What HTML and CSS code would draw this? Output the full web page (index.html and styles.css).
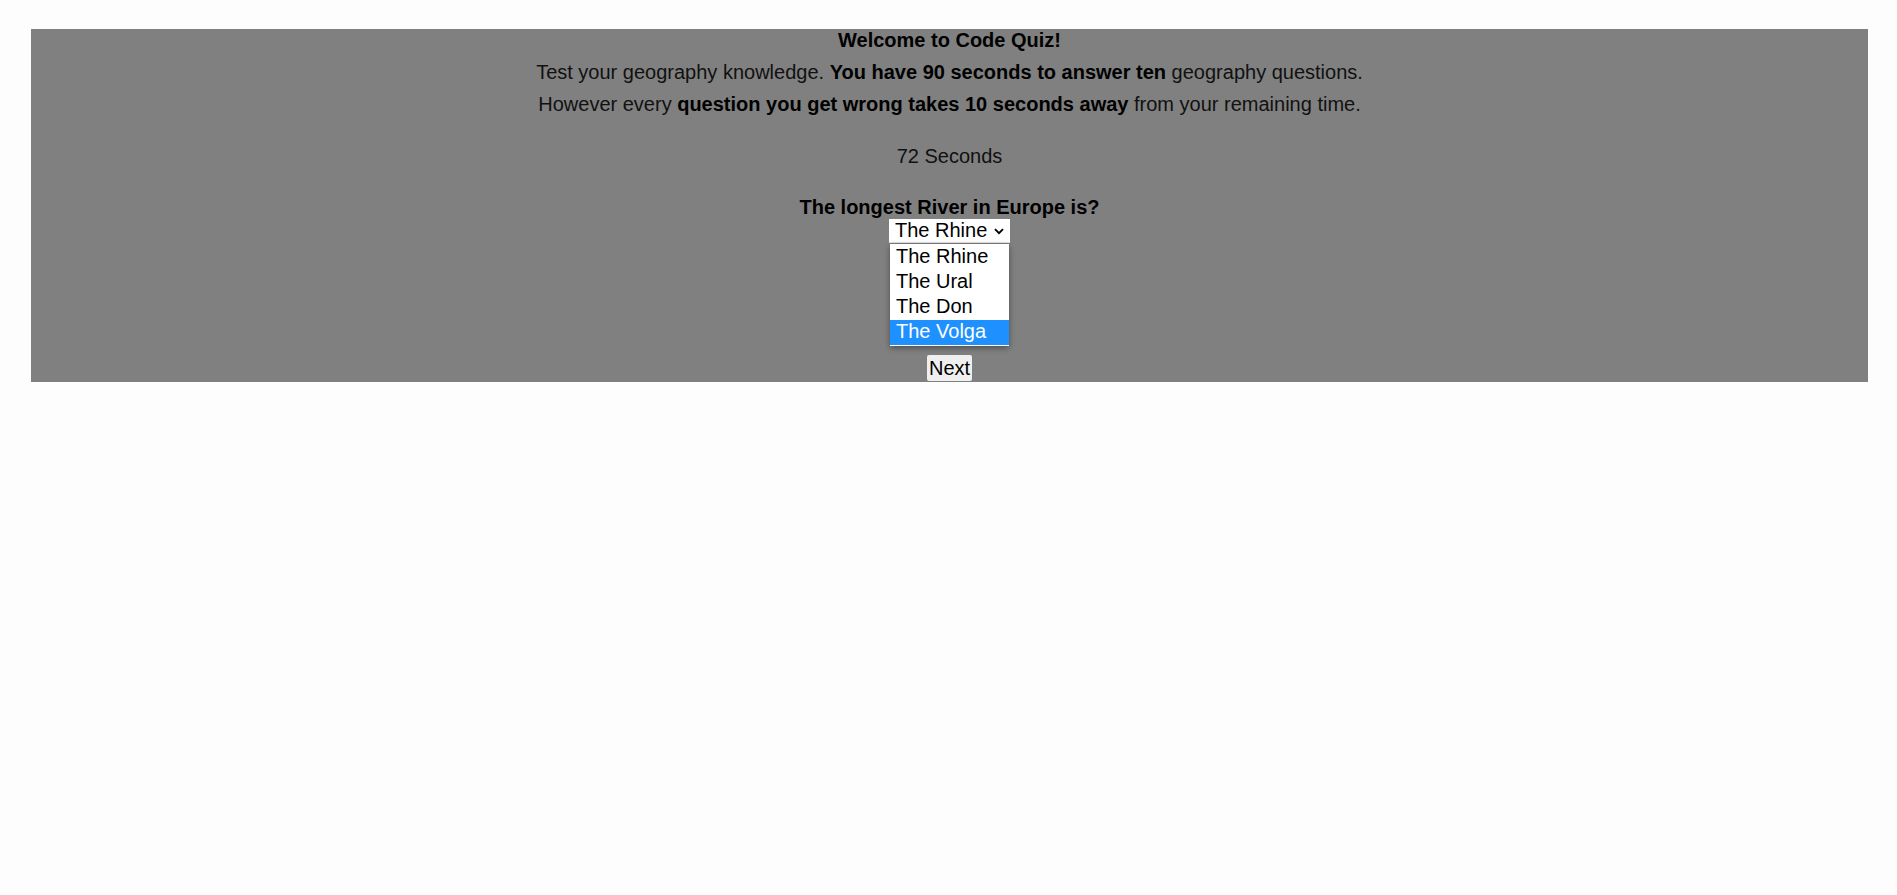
FILE: index.html
```html
<!DOCTYPE html>
<html lang="en">
<head>
<meta charset="utf-8">
<title>Code Quiz</title>
<link rel="stylesheet" href="styles.css">
</head>
<body>
<main class="quiz">
  <h1 class="title">Welcome to Code Quiz!</h1>
  <p class="intro">Test your geography knowledge. <b>You have 90 seconds to answer ten</b> geography questions.</p>
  <p class="intro">However every <b>question you get wrong takes 10 seconds away</b> from your remaining time.</p>
  <p class="timer">72 Seconds</p>
  <h2 class="question">The longest River in Europe is?</h2>
  <div class="select-wrap">
    <div class="select">
      <span class="select-value">The Rhine</span>
      <svg class="chevron" width="10" height="7" viewBox="0 0 10 7"><path d="M1 1.2 L5 5.2 L9 1.2" fill="none" stroke="#000" stroke-width="1.9"/></svg>
    </div>
    <ul class="options">
      <li class="option">The Rhine</li>
      <li class="option">The Ural</li>
      <li class="option">The Don</li>
      <li class="option option-active">The Volga</li>
    </ul>
  </div>
  <button class="next">Next</button>
</main>
</body>
</html>
```

FILE: styles.css
```css
html, body {
  margin: 0;
  padding: 0;
  background: #fdfdfd;
}
body {
  font-family: "Liberation Sans", Arial, sans-serif;
  font-size: 20px;
  color: #000;
}
.quiz {
  margin: 29px 29px 0 31px;
  background: #808080;
  display: flex;
  flex-direction: column;
  align-items: center;
  padding: 0 0 1px;
  text-align: center;
}
.title {
  margin: 0;
  font-size: 20px;
  line-height: 23px;
  font-weight: bold;
}
.intro {
  margin: 9px 0 0;
  line-height: 23px;
  color: #111;
}
.intro b { color: #000; }
.timer {
  margin: 29px 0 0;
  line-height: 23px;
  color: #111;
}
.question {
  margin: 28px 0 0;
  font-size: 20px;
  line-height: 23px;
  font-weight: bold;
}
.select-wrap {
  position: relative;
  margin-top: 0;
}
.select {
  box-sizing: border-box;
  width: 121px;
  height: 24px;
  background: #fff;
  border-bottom: 1px solid #e4e4e4;
  display: flex;
  align-items: center;
  padding: 0 6px;
  line-height: 23px;
}
.select-value {
  flex: 1;
  text-align: left;
}
.chevron {
  margin-right: 0;
  margin-top: 1px;
}
.options {
  position: absolute;
  top: 25px;
  left: 1px;
  width: 119px;
  margin: 0;
  padding: 1px 0;
  list-style: none;
  background: #fff;
  box-shadow: 0 2px 6px rgba(0, 0, 0, 0.4);
  text-align: left;
  z-index: 2;
}
.option {
  box-sizing: border-box;
  height: 25px;
  line-height: 22px;
  padding: 0 6px 3px;
  color: #000;
}
.option-active {
  background: #1e90ff;
  color: #fff;
}
.next {
  margin-top: 112px;
  box-sizing: border-box;
  height: 26px;
  padding: 0 2px;
  border: none;
  border-radius: 2px;
  background: #efefef;
  font-family: "Liberation Sans", Arial, sans-serif;
  font-size: 20px;
  line-height: 26px;
  color: #000;
}
```
